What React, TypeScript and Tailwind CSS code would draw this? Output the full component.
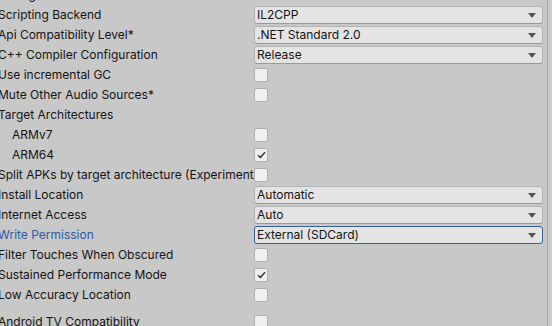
import type { ReactNode } from "react";

type Row =
  | { kind: "header"; label: string; indent?: boolean; gapBefore?: boolean }
  | { kind: "select"; label: string; value: string; focused?: boolean; changed?: boolean }
  | { kind: "check"; label: string; checked: boolean; indent?: boolean; gapBefore?: boolean };

const rows: Row[] = [
  { kind: "header", label: "Configuration" },
  { kind: "select", label: "Scripting Backend", value: "IL2CPP" },
  { kind: "select", label: "Api Compatibility Level*", value: ".NET Standard 2.0" },
  { kind: "select", label: "C++ Compiler Configuration", value: "Release" },
  { kind: "check", label: "Use incremental GC", checked: false },
  { kind: "check", label: "Mute Other Audio Sources*", checked: false },
  { kind: "header", label: "Target Architectures" },
  { kind: "check", label: "ARMv7", checked: false, indent: true },
  { kind: "check", label: "ARM64", checked: true, indent: true },
  { kind: "check", label: "Split APKs by target architecture (Experimental)", checked: false },
  { kind: "select", label: "Install Location", value: "Automatic" },
  { kind: "select", label: "Internet Access", value: "Auto" },
  { kind: "select", label: "Write Permission", value: "External (SDCard)", focused: true },
  { kind: "check", label: "Filter Touches When Obscured", checked: false },
  { kind: "check", label: "Sustained Performance Mode", checked: true },
  { kind: "check", label: "Low Accuracy Location", checked: false },
  { kind: "check", label: "Android TV Compatibility", checked: false, gapBefore: true },
];

function Arrow() {
  return (
    <svg width="8" height="5" viewBox="0 0 8 5" className="shrink-0">
      <path d="M0 0 L8 0 L4 5 Z" fill="#555555" />
    </svg>
  );
}

function Dropdown({ value, focused }: { value: string; focused?: boolean }) {
  return (
    <div
      className={`flex h-[18px] w-[289px] items-center justify-between rounded-[3px] border bg-[#e4e4e4] pl-[2px] pr-[6px] ${
        focused ? "border-[#3a5f94]" : "border-[#b4b4b4] border-b-[#999999]"
      }`}
    >
      <span className="whitespace-nowrap leading-[16px]">{value}</span>
      <Arrow />
    </div>
  );
}

function Checkbox({ checked }: { checked: boolean }) {
  return (
    <div className="flex h-[14px] w-[14px] items-center justify-center rounded-[2px] border border-[#b0b0b0] bg-[#f0f0f0]">
      {checked ? (
        <svg width="9" height="8" viewBox="0 0 9 8">
          <path d="M1 4.2 L3.4 6.5 L8 1.2" fill="none" stroke="#2a2a2a" strokeWidth="1.3" />
        </svg>
      ) : null}
    </div>
  );
}

function Line({ row }: { row: Row }) {
  let control: ReactNode = null;
  if (row.kind === "select") control = <Dropdown value={row.value} focused={row.focused} />;
  if (row.kind === "check") control = <Checkbox checked={row.checked} />;
  const indent = "indent" in row && row.indent;
  const blue = row.kind === "select" && row.focused;

  return (
    <div className={`flex h-[20px] items-center ${"gapBefore" in row && row.gapBefore ? "mt-[7px]" : ""}`}>
      <div
        className={`w-[254px] shrink-0 overflow-hidden whitespace-nowrap ${indent ? "pl-[14px]" : "pl-0"} ${
          blue ? "text-[#2d5ba6]" : "text-[#141414]"
        }`}
      >
        <span className="relative -left-[2px]">{row.label}</span>
      </div>
      {control}
    </div>
  );
}

export default function App() {
  return (
    <div
      className="relative flex h-[326px] w-[552px] overflow-hidden bg-[#c8c8c8] text-[12px] text-[#141414]"
      style={{ fontFamily: "Inter, 'Noto Sans', sans-serif" }}
    >
      <div className="-mt-[15px] flex-1">
        {rows.map((row) => (
          <Line key={row.label} row={row} />
        ))}
      </div>
      <div className="w-[5px] border-l border-[#a6a6a6] bg-[#cbcbcb]" />
    </div>
  );
}
